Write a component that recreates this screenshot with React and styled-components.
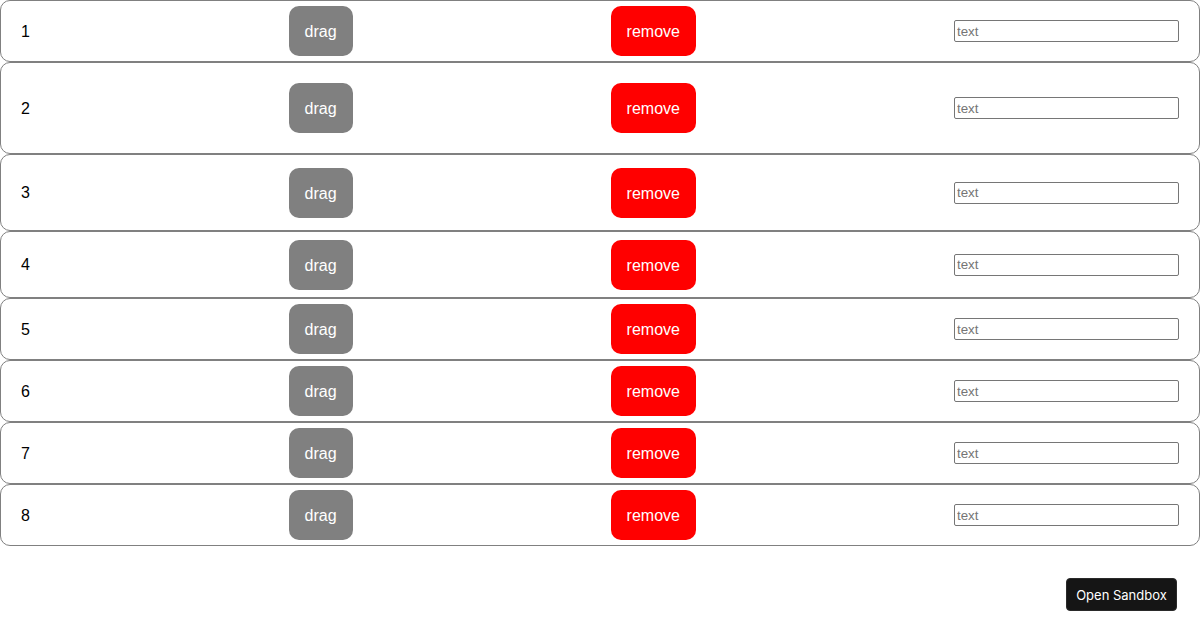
import React from "react";
import styled, { createGlobalStyle } from "styled-components";

const GlobalStyle = createGlobalStyle`
  body {
    margin: 0;
    background: #fff;
    font-family: "Liberation Sans", Arial, sans-serif;
  }
`;

const List = styled.div`
  display: flex;
  flex-direction: column;
  width: 100%;
`;

const Row = styled.div`
  display: flex;
  align-items: center;
  justify-content: space-between;
  padding: ${(p) => p.pad}px 20px;
  border: 1px solid #808080;
  border-radius: 10px;
  background: #fff;
  box-sizing: border-box;
`;

const Num = styled.span`
  font-size: 16px;
  color: #000;
  width: 9.5px;
  padding-top: 1px;
`;

const Button = styled.button`
  border: none;
  border-radius: 10px;
  padding: 17px 16px 15px;
  font-family: "Liberation Sans", Arial, sans-serif;
  font-size: 16px;
  line-height: 18px;
  color: #fff;
  background: ${(p) => (p.danger ? "#ff0000" : "#808080")};
  cursor: pointer;
`;

const TextInput = styled.input`
  width: 225px;
  height: 22px;
  box-sizing: border-box;
  border: 1px solid #767676;
  border-radius: 2px;
  padding: 1px 2px;
  font-family: "Liberation Sans", Arial, sans-serif;
  font-size: 13.33px;
  &::placeholder {
    color: #757575;
  }
`;

const SandboxButton = styled.a`
  position: fixed;
  right: 23px;
  bottom: 19px;
  width: 111px;
  height: 33px;
  box-sizing: border-box;
  display: flex;
  align-items: center;
  justify-content: center;
  background: #151515;
  color: #fff;
  border-radius: 4px;
  border: 1px solid #2a2a2a;
  font-family: Inter, "Liberation Sans", sans-serif;
  font-size: 13px;
  text-decoration: none;
`;

const rows = [
  { id: 1, pad: 5 },
  { id: 2, pad: 20 },
  { id: 3, pad: 12.5 },
  { id: 4, pad: 7.5 },
  { id: 5, pad: 5 },
  { id: 6, pad: 5 },
  { id: 7, pad: 5 },
  { id: 8, pad: 5 },
];

const App = () => {
  return (
    <>
      <GlobalStyle />
      <List>
        {rows.map((r) => (
          <Row key={r.id} pad={r.pad}>
            <Num>{r.id}</Num>
            <Button>drag</Button>
            <Button danger>remove</Button>
            <TextInput placeholder="text" />
          </Row>
        ))}
      </List>
      <SandboxButton href="#">Open Sandbox</SandboxButton>
    </>
  );
};

export default App;
